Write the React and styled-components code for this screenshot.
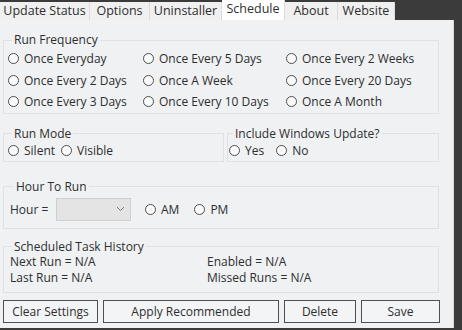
import React from "react";
import styled, { createGlobalStyle } from "styled-components";

const Global = createGlobalStyle`
  html, body { margin: 0; padding: 0; background: #3b3b3b; }
  body { font-family: "Open Sans", "Noto Sans", sans-serif; font-size: 12px; color: #2e2e2e; }
  * { box-sizing: border-box; }
`;

const Window = styled.div`
  width: 462px;
  height: 330px;
  background: #3b3b3b;
  display: flex;
  flex-direction: column;
`;

const TabBar = styled.div`
  display: flex;
  height: 20px;
  align-items: flex-end;
  background: #3b3b3b;
`;

const Tab = styled.div`
  width: ${(p) => p.$w}px;
  height: ${(p) => (p.$active ? 20 : 18)}px;
  background: ${(p) => (p.$active ? "#ffffff" : "#f0f0f0")};
  border-right: 1px solid #dcdcdc;
  display: flex;
  align-items: ${(p) => (p.$active ? "flex-start" : "center")};
  justify-content: center;
  font-size: 12.5px;
  line-height: 16px;
  padding-top: ${(p) => (p.$active ? "1px" : "0")};
  color: #2e2e2e;
  white-space: nowrap;
`;

const Panel = styled.div`
  width: 454px;
  height: 308px;
  background: #eff1f3;
  border-right: 1px solid #d4d6d8;
  padding: 13px 0 0 3px;
  display: flex;
  flex-direction: column;
`;

const Group = styled.fieldset`
  margin: 0;
  padding: ${(p) => p.$pad || "0 0 0 4px"};
  border: 1px solid #dfe1e4;
  min-width: 0;
  width: ${(p) => p.$w}px;
  margin-top: ${(p) => p.$mt || 0}px;
`;

const Legend = styled.legend`
  padding: 0 2px;
  margin-left: 4px;
  font-size: 12px;
  line-height: 14px;
  color: #2e2e2e;
`;

const FreqGrid = styled.div`
  display: grid;
  grid-template-columns: 135px 143px 1fr;
  grid-auto-rows: 21.5px;
  padding-top: 1px;
`;

const Radio = styled.label`
  display: flex;
  align-items: center;
  gap: 5px;
  white-space: nowrap;
  margin-right: ${(p) => p.$mr || 0}px;
  font-size: 12px;
`;

const Circle = styled.span`
  width: 11px;
  height: 11px;
  border-radius: 50%;
  border: 1px solid #4d4d4d;
  background: #fbfbfb;
  flex: none;
`;

const Row = styled.div`
  display: flex;
  gap: ${(p) => p.$gap || 0}px;
  margin-top: ${(p) => p.$mt || 0}px;
`;

const InlineRow = styled.div`
  display: flex;
  align-items: center;
  height: ${(p) => p.$h || 20}px;
`;

const Label = styled.span`
  width: ${(p) => p.$w}px;
  white-space: nowrap;
`;

const Select = styled.div`
  width: 75px;
  height: 23px;
  background: #e4e4e4;
  border: 1px solid #cfcfcf;
  display: flex;
  align-items: center;
  justify-content: flex-end;
  padding-right: 5px;
  margin-right: 14px;
`;

const HistGrid = styled.div`
  display: grid;
  grid-template-columns: 197px 1fr;
  grid-auto-rows: 16px;
  align-items: center;
  padding: 0 0 3px 2px;
`;

const Buttons = styled.div`
  display: flex;
  gap: 5px;
  margin-top: 7px;
`;

const Button = styled.div`
  width: ${(p) => p.$w}px;
  height: 23px;
  border: 1px solid #4f4f4f;
  background: #f3f4f5;
  display: flex;
  align-items: center;
  justify-content: center;
  font-size: 12px;
  white-space: nowrap;
`;

const R = ({ children, mr }) => (
  <Radio $mr={mr}>
    <Circle />
    {children}
  </Radio>
);

export default function App() {
  return (
    <Window>
      <Global />
      <TabBar>
        <Tab $w={90}>Update Status</Tab>
        <Tab $w={60}>Options</Tab>
        <Tab $w={72}>Uninstaller</Tab>
        <Tab $w={63} $active>Schedule</Tab>
        <Tab $w={53}>About</Tab>
        <Tab $w={57}>Website</Tab>
      </TabBar>
      <Panel>
        <Group $w={436}>
          <Legend>Run Frequency</Legend>
          <FreqGrid>
            <R>Once Everyday</R>
            <R>Once Every 5 Days</R>
            <R>Once Every 2 Weeks</R>
            <R>Once Every 2 Days</R>
            <R>Once A Week</R>
            <R>Once Every 20 Days</R>
            <R>Once Every 3 Days</R>
            <R>Once Every 10 Days</R>
            <R>Once A Month</R>
          </FreqGrid>
        </Group>
        <Row $gap={3} $mt={13}>
          <Group $w={221} $pad="0 0 0 4px">
            <Legend>Run Mode</Legend>
            <InlineRow>
              <R mr={6}>Silent</R>
              <R>Visible</R>
            </InlineRow>
          </Group>
          <Group $w={212} $pad="0 0 0 1px">
            <Legend>Include Windows Update?</Legend>
            <InlineRow>
              <R mr={12}>Yes</R>
              <R>No</R>
            </InlineRow>
          </Group>
        </Row>
        <Group $w={436} $mt={18} $pad="4px 0 7px 6px">
          <Legend>Hour To Run</Legend>
          <InlineRow $h={23}>
            <Label $w={46}>Hour =</Label>
            <Select>
              <svg width="9" height="6" viewBox="0 0 9 6">
                <path d="M1 1 L4.5 4.5 L8 1" fill="none" stroke="#7a7a7a" strokeWidth="1" />
              </svg>
            </Select>
            <R mr={15}>AM</R>
            <R>PM</R>
          </InlineRow>
        </Group>
        <Group $w={436} $mt={11} $pad="0 0 3px 4px">
          <Legend>Scheduled Task History</Legend>
          <HistGrid>
            <span>Next Run = N/A</span>
            <span>Enabled = N/A</span>
            <span>Last Run = N/A</span>
            <span>Missed Runs = N/A</span>
          </HistGrid>
        </Group>
        <Buttons>
          <Button $w={95}>Clear Settings</Button>
          <Button $w={176}>Apply Recommended</Button>
          <Button $w={72}>Delete</Button>
          <Button $w={79}>Save</Button>
        </Buttons>
      </Panel>
    </Window>
  );
}
